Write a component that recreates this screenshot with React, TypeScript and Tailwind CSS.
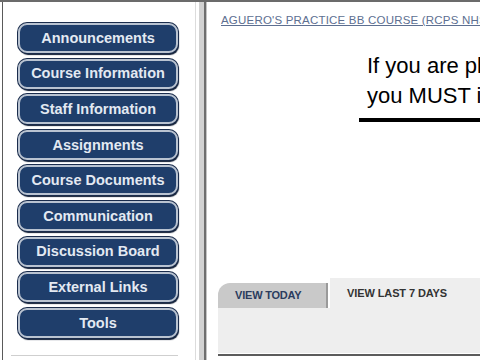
import React from 'react';

const menuItems = [
  'Announcements',
  'Course Information',
  'Staff Information',
  'Assignments',
  'Course Documents',
  'Communication',
  'Discussion Board',
  'External Links',
  'Tools',
];

function MenuButton({ label }: { label: string }) {
  return (
    <button className="flex h-[30px] w-[160px] items-center justify-center rounded-[9px] border-2 border-[#b9c3d1] bg-[#1f3e6b] text-[14.5px] font-bold leading-none text-[#e3e9f2] shadow-[0_0_0_1px_#1a2c4c,1px_2px_1px_#0f1c33]">
      {label}
    </button>
  );
}

export default function App() {
  return (
    <div className="flex h-[360px] w-[480px] overflow-hidden border-t-2 border-[#6b6b6b] bg-white font-['Liberation_Sans',Arial,sans-serif]">
      {/* Course menu */}
      <div className="ml-[2px] flex w-[194px] shrink-0 flex-col border-l border-r border-l-[#5a5a5a] border-r-[#dcdcdc] pl-[15px] pt-[21px]">
        <div className="flex flex-col gap-[5.6px]">
          {menuItems.map((item) => (
            <MenuButton key={item} label={item} />
          ))}
        </div>
        <div className="mt-auto mb-[4px] ml-[-7px] h-[1px] w-[167px] bg-[#cfcfcf]" />
      </div>

      {/* Frame divider */}
      <div className="ml-[3px] h-full w-[5px] shrink-0 bg-[#d2d2d2]" />
      <div className="h-full w-[2px] shrink-0 bg-[#6e6e6e]" />
      <div className="h-full w-[1px] shrink-0 bg-[#c4c4c4]" />

      {/* Content */}
      <div className="flex min-w-0 flex-1 flex-col overflow-hidden">
        <div className="whitespace-nowrap pl-[14px] pt-[13px] text-[11.5px] leading-none tracking-[0.2px] text-[#5d6f91] underline">
          AGUERO'S PRACTICE BB COURSE (RCPS NHS HIGH SCHOOL)
        </div>

        <div className="mt-[24px] ml-[152px] flex flex-col whitespace-nowrap">
          <div className="pl-[8px] text-[22px] leading-[30px] text-black">
            <div>If you are planning to</div>
            <div>you MUST include</div>
          </div>
          <div className="mt-[7px] h-[4px] w-[200px] bg-black" />
        </div>

        <div className="mt-auto ml-[11px] mb-[4px] flex flex-col">
          <div className="flex items-end">
            <div className="flex h-[25px] w-[110px] items-center rounded-tl-[12px] border-r-2 border-[#9a9a9a] bg-[#c9c9c9] pl-[17px] text-[11px] font-bold tracking-[-0.2px] text-[#2b3c5e]">
              VIEW TODAY
            </div>
            <div className="ml-[2px] flex h-[30px] flex-1 items-start bg-[#eeeeee] pl-[17px] pt-[10px] text-[11px] font-bold leading-none tracking-[-0.1px] text-[#333333]">
              VIEW LAST 7 DAYS
            </div>
          </div>
          <div className="h-[45px] bg-[#eeeeee]" />
          <div className="mt-[1px] h-[2px] bg-[#5c5c5c]" />
        </div>
      </div>
    </div>
  );
}
